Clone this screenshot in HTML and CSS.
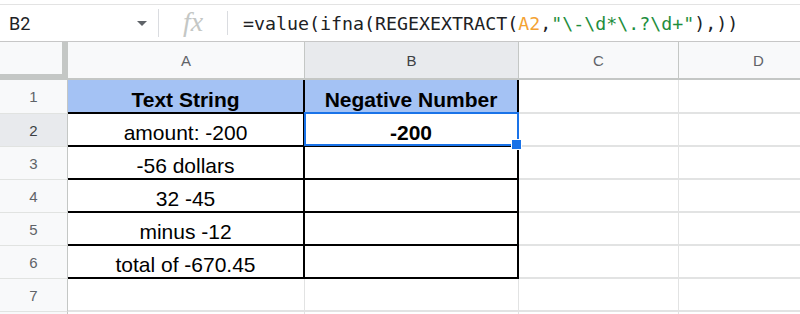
FILE: index.html
```html
<!DOCTYPE html>
<html>
<head>
<meta charset="utf-8">
<link rel="stylesheet" href="styles.css">
</head>
<body>
<div class="formula-bar">
  <div class="namebox"><span class="ref">B2</span><span class="caret"></span></div>
  <div class="sep"></div>
  <div class="fx">fx</div>
  <div class="sep short"></div>
  <div class="formula">=value(ifna(REGEXEXTRACT(<span class="ref-a">A2</span>,<span class="str">"\-\d*\.?\d+"</span>),))</div>
</div>
<div class="sheet">
  <div class="corner"></div>
  <div class="colhead">A</div>
  <div class="colhead sel">B</div>
  <div class="colhead">C</div>
  <div class="colhead">D</div>

  <div class="rowhead r1">1</div>
  <div class="cell r1 tbl hdr">Text String</div>
  <div class="cell r1 tbl hdr">Negative Number</div>
  <div class="cell r1"></div>
  <div class="cell r1"></div>

  <div class="rowhead sel">2</div>
  <div class="cell tbl">amount: -200</div>
  <div class="cell tbl active"><b>-200</b><div class="selection"></div><div class="handle"></div></div>
  <div class="cell"></div>
  <div class="cell"></div>

  <div class="rowhead">3</div>
  <div class="cell tbl">-56 dollars</div>
  <div class="cell tbl"></div>
  <div class="cell"></div>
  <div class="cell"></div>

  <div class="rowhead">4</div>
  <div class="cell tbl">32 -45</div>
  <div class="cell tbl"></div>
  <div class="cell"></div>
  <div class="cell"></div>

  <div class="rowhead">5</div>
  <div class="cell tbl">minus -12</div>
  <div class="cell tbl"></div>
  <div class="cell"></div>
  <div class="cell"></div>

  <div class="rowhead">6</div>
  <div class="cell tbl">total of -670.45</div>
  <div class="cell tbl"></div>
  <div class="cell"></div>
  <div class="cell"></div>

  <div class="rowhead">7</div>
  <div class="cell"></div>
  <div class="cell"></div>
  <div class="cell"></div>
  <div class="cell"></div>

  <div class="rowhead"></div>
  <div class="cell"></div>
  <div class="cell"></div>
  <div class="cell"></div>
  <div class="cell"></div>
</div>
</body>
</html>
```
FILE: styles.css
```css
* { box-sizing: border-box; }
html, body {
  margin: 0;
  padding: 0;
  background: #fff;
  overflow: hidden;
  width: 800px;
  height: 314px;
}
body { font-family: "Liberation Sans", Arial, sans-serif; }

.formula-bar {
  margin-top: 4px;
  height: 38px;
  border-top: 1px solid #e3e3e3;
  border-bottom: 1px solid #c7c7c7;
  display: flex;
  align-items: center;
}
.namebox {
  width: 158px;
  height: 100%;
  display: flex;
  align-items: center;
  padding-left: 9px;
  padding-right: 11px;
}
.ref {
  font-family: Roboto, "Liberation Sans", sans-serif;
  font-size: 18px;
  color: #202124;
  flex: 1;
}
.caret {
  width: 0;
  height: 0;
  border-left: 5px solid transparent;
  border-right: 5px solid transparent;
  border-top: 5px solid #5f6368;
  margin-top: 1px;
}
.sep {
  width: 1px;
  height: 28px;
  background: #dadce0;
}
.sep.short { height: 24px; }
.fx {
  width: 68px;
  text-align: center;
  font-family: "Liberation Serif", serif;
  font-style: italic;
  font-size: 28px;
  color: #c4c7c5;
  line-height: 1;
  padding-bottom: 3px;
}
.formula {
  padding-left: 15px;
  font-family: "DejaVu Sans Mono", monospace;
  font-size: 18.3px;
  color: #202124;
  white-space: nowrap;
}
.ref-a { color: #f4a233; }
.str { color: #1e8e3e; }

.sheet {
  display: grid;
  grid-template-columns: 68px 237px 214px 160px 160px;
  grid-template-rows: 38px 34px 33px 33px 33px 33px 33px 33px 33px;
}
.corner {
  background: #f8f9fa;
  border-right: 6px solid #c4c7c5;
  border-bottom: 6px solid #c4c7c5;
}
.colhead {
  background: #f8f9fa;
  border-right: 1px solid #c4c7c5;
  border-bottom: 2px solid #c4c7c5;
  color: #5f6368;
  font-size: 15px;
  display: flex;
  align-items: center;
  justify-content: center;
}
.colhead.sel { background: #e8eaed; color: #3c4043; }
.rowhead {
  background: #f8f9fa;
  border-right: 1px solid #c4c7c5;
  border-bottom: 1px solid #e1e3e1;
  color: #5f6368;
  font-size: 15px;
  display: flex;
  align-items: center;
  justify-content: center;
}
.rowhead.sel { background: #e8eaed; color: #3c4043; }
.cell {
  border-right: 1px solid #e2e3e3;
  border-bottom: 2px solid #e2e3e3;
  font-size: 21px;
  color: #000;
  display: flex;
  align-items: flex-end;
  justify-content: center;
  white-space: nowrap;
}
.cell.tbl {
  border-right: 2px solid #000;
  border-bottom: 2px solid #000;
}
.cell.hdr {
  background: #a4c2f4;
  font-weight: bold;
}
.cell.active { position: relative; }
.selection {
  position: absolute;
  z-index: 2;
  top: -2px;
  left: -1px;
  right: -2px;
  bottom: -1px;
  border: 2px solid #1a73e8;
}
.handle {
  position: absolute;
  z-index: 3;
  right: -5px;
  bottom: -5px;
  width: 11px;
  height: 11px;
  background: #1a73e8;
  border: 1px solid #fff;
}
```
